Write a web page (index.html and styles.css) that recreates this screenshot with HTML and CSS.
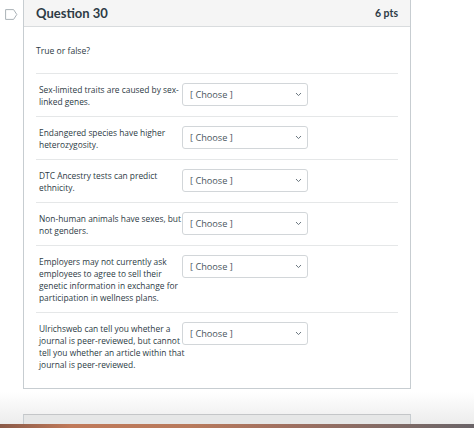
FILE: index.html
```html
<!DOCTYPE html>
<html>
<head>
<meta charset="utf-8">
<link rel="stylesheet" href="styles.css">
</head>
<body>
<div class="page">
  <div class="flag">
    <svg width="13" height="11" viewBox="0 0 13 11"><path d="M0.6 0.6 H8.6 L11.8 5.5 L8.6 10.4 H0.6 Z" fill="none" stroke="#aab2b7" stroke-width="1" stroke-linejoin="round"/></svg>
  </div>
  <div class="card">
    <div class="header">
      <span class="title">Question 30</span>
      <span class="pts">6 pts</span>
    </div>
    <div class="body">
      <p class="prompt">True or false?</p>
      <div class="row">
        <div class="q">Sex-limited traits are caused by sex-linked genes.</div>
        <div class="select"><span>[ Choose ]</span><svg class="chev" width="7" height="5" viewBox="0 0 7 5"><path d="M1 1 L3.5 3.6 L6 1" fill="none" stroke="#6b7780" stroke-width="1"/></svg></div>
      </div>
      <div class="row">
        <div class="q">Endangered species have higher heterozygosity.</div>
        <div class="select"><span>[ Choose ]</span><svg class="chev" width="7" height="5" viewBox="0 0 7 5"><path d="M1 1 L3.5 3.6 L6 1" fill="none" stroke="#6b7780" stroke-width="1"/></svg></div>
      </div>
      <div class="row">
        <div class="q">DTC Ancestry tests can predict ethnicity.</div>
        <div class="select"><span>[ Choose ]</span><svg class="chev" width="7" height="5" viewBox="0 0 7 5"><path d="M1 1 L3.5 3.6 L6 1" fill="none" stroke="#6b7780" stroke-width="1"/></svg></div>
      </div>
      <div class="row">
        <div class="q">Non-human animals have sexes, but not genders.</div>
        <div class="select"><span>[ Choose ]</span><svg class="chev" width="7" height="5" viewBox="0 0 7 5"><path d="M1 1 L3.5 3.6 L6 1" fill="none" stroke="#6b7780" stroke-width="1"/></svg></div>
      </div>
      <div class="row">
        <div class="q">Employers may not currently ask employees to agree to sell their genetic information in exchange for participation in wellness plans.</div>
        <div class="select"><span>[ Choose ]</span><svg class="chev" width="7" height="5" viewBox="0 0 7 5"><path d="M1 1 L3.5 3.6 L6 1" fill="none" stroke="#6b7780" stroke-width="1"/></svg></div>
      </div>
      <div class="row last">
        <div class="q">Ulrichsweb can tell you whether a journal is peer-reviewed, but cannot tell you whether an article within that journal is peer-reviewed.</div>
        <div class="select"><span>[ Choose ]</span><svg class="chev" width="7" height="5" viewBox="0 0 7 5"><path d="M1 1 L3.5 3.6 L6 1" fill="none" stroke="#6b7780" stroke-width="1"/></svg></div>
      </div>
    </div>
  </div>
  <div class="spacer"></div>
  <div class="card next"></div>
</div>
<div class="bar"></div>
</body>
</html>
```
FILE: styles.css
```css
html, body {
  margin: 0;
  padding: 0;
  background: #fff;
}
body {
  width: 474px;
  height: 428px;
  overflow: hidden;
  display: flex;
  flex-direction: column;
  font-family: Lato, "Open Sans", sans-serif;
  color: #2d3b45;
  background: linear-gradient(to bottom, #fff 0, #fff 392px, #ececec 424px);
}
.page {
  flex: 1;
  display: grid;
  grid-template-columns: 23px 388px;
  grid-template-rows: auto 1fr 10px;
}
.flag {
  grid-row: 1;
  padding: 9px 0 0 5px;
}
.flag svg { display: block; }
.card {
  grid-column: 2;
  border: 1px solid #c7cdd1;
  border-top: none;
  background: #fff;
  box-sizing: border-box;
}
.card.next {
  grid-row: 3;
  border-top: 1px solid #c4c6c8;
  border-bottom: none;
  background: #e6e7e7;
}
.spacer { grid-column: 2; grid-row: 2; }
.header {
  height: 27px;
  box-sizing: border-box;
  background: #f5f5f5;
  border-bottom: 1px solid #d9dcde;
  display: flex;
  align-items: center;
  justify-content: space-between;
  padding: 0 12px 1px 12px;
  font-weight: 700;
}
.title { font-size: 13px; }
.pts { font-size: 10.5px; }
.body {
  padding: 0 12px 9px 12px;
}
.prompt {
  margin: 0;
  font-family: "Open Sans", sans-serif;
  font-size: 8.6px;
  line-height: 12px;
  padding: 18px 0 16px 0;
  border-bottom: 1px solid #e5e7e8;
}
.row {
  display: flex;
  align-items: flex-start;
  padding: 10px 0 8px 3px;
  border-bottom: 1px solid #e5e7e8;
}
.row.last { border-bottom: none; }
.q {
  width: 146px;
  margin-right: -3px;
  flex: none;
  font-family: "Open Sans", sans-serif;
  font-size: 8.4px;
  line-height: 12px;
}
.select {
  width: 126px;
  height: 23px;
  margin-top: -1px;
  box-sizing: border-box;
  border: 1px solid #d2d6d9;
  border-radius: 3px;
  display: flex;
  align-items: center;
  justify-content: space-between;
  padding: 0 5px 0 7px;
  font-family: "Open Sans", sans-serif;
  font-size: 9.2px;
  color: #4a565e;
  background: #fff;
}
.chev { display: block; }
.bar {
  height: 4px;
  flex: none;
  background: linear-gradient(to right, #8a5a48 0, #c07a5a 15%, #b87a5c 40%, #a07060 60%, #7e6a66 85%, #6a6468 100%);
}
```
